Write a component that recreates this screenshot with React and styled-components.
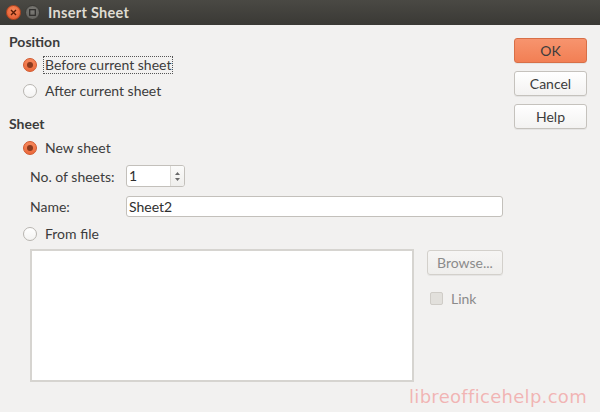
import React from "react";
import styled, { createGlobalStyle } from "styled-components";

const GlobalStyle = createGlobalStyle`
  html, body {
    margin: 0;
    padding: 0;
    background: #f2f1f0;
  }
  body {
    font-family: Lato, "Noto Sans", sans-serif;
    font-size: 14px;
    color: #3c3c3c;
  }
`;

const Window = styled.div`
  width: 600px;
  height: 412px;
  background: #f2f1f0;
  position: relative;
  overflow: hidden;
`;

const TitleBar = styled.div`
  height: 25px;
  background: linear-gradient(#4a4944, #3a3935);
  display: flex;
  align-items: center;
  padding-left: 6px;
  gap: 4px;
`;

const WinButton = styled.div`
  width: 13px;
  height: 13px;
  flex-shrink: 0;
  border-radius: 50%;
  background: ${(p) =>
    p.close
      ? "radial-gradient(circle at 50% 35%, #f78a5a, #e0522a)"
      : "radial-gradient(circle at 50% 35%, #7d7c77, #5d5c58)"};
  border: 1px solid ${(p) => (p.close ? "#b5461f" : "#3a3935")};
  display: flex;
  align-items: center;
  justify-content: center;
`;

const Title = styled.span`
  color: #dfdbd2;
  font-weight: bold;
  font-size: 14.5px;
  margin-left: 4px;
  letter-spacing: 0.3px;
`;

const Body = styled.div`
  display: flex;
  padding: 8px 0 0 9px;
`;

const Main = styled.div`
  width: 494px;
  display: flex;
  flex-direction: column;
`;

const Heading = styled.div`
  height: 19px;
  line-height: 18px;
  font-weight: bold;
  margin-top: ${(p) => p.top || 0}px;
`;

const RadioRow = styled.div`
  height: 26px;
  display: flex;
  align-items: center;
  padding-left: 14px;
  gap: 8px;
  margin-top: ${(p) => p.top || 0}px;
`;

const Radio = styled.div`
  width: 14px;
  height: 14px;
  box-sizing: border-box;
  border-radius: 50%;
  border: 1px solid ${(p) => (p.on ? "#d0572c" : "#b8b5b0")};
  background: ${(p) =>
    p.on ? "linear-gradient(#f7875b, #ec6a3c)" : "linear-gradient(#ffffff, #f4f3f2)"};
  display: flex;
  align-items: center;
  justify-content: center;
  &::after {
    content: "";
    display: ${(p) => (p.on ? "block" : "none")};
    width: 6px;
    height: 6px;
    border-radius: 50%;
    background: #8a3a1e;
  }
`;

const RadioLabel = styled.span`
  padding: 0 1px;
  border: 1px dotted ${(p) => (p.focus ? "#555" : "transparent")};
  line-height: 16px;
  margin-left: -2px;
`;

const FieldRow = styled.div`
  display: flex;
  align-items: center;
  padding-left: 21px;
  margin-top: ${(p) => p.top || 0}px;
`;

const FieldLabel = styled.span`
  width: 96px;
`;

const SpinBox = styled.div`
  display: flex;
  width: 59px;
  height: 22px;
  box-sizing: border-box;
  border: 1px solid #c3c0bb;
  border-radius: 3px;
  background: #fff;
`;

const SpinInput = styled.div`
  flex: 1;
  padding-left: 2px;
  line-height: 20px;
  color: #2f2f2f;
`;

const SpinButtons = styled.div`
  width: 13px;
  border-left: 1px solid #dcdad6;
  background: linear-gradient(#fbfbfa, #efeeec);
  border-radius: 0 2px 2px 0;
  display: flex;
  flex-direction: column;
  align-items: center;
  justify-content: center;
  gap: 3px;
`;

const TextField = styled.div`
  width: 377px;
  height: 21px;
  box-sizing: border-box;
  border: 1px solid #c3c0bb;
  border-radius: 3px;
  background: #fff;
  padding-left: 2px;
  line-height: 19px;
  color: #2f2f2f;
`;

const FileArea = styled.div`
  display: flex;
  margin-top: 2px;
  padding-left: 21px;
`;

const PreviewBox = styled.div`
  width: 384px;
  height: 133px;
  box-sizing: border-box;
  border: 2px solid #d6d4d0;
  background: #fff;
`;

const FileSide = styled.div`
  margin-left: 13px;
  padding-top: 1px;
  display: flex;
  flex-direction: column;
`;

const Button = styled.div`
  width: ${(p) => p.w || 73}px;
  height: 25px;
  box-sizing: border-box;
  border-radius: 3px;
  display: flex;
  align-items: center;
  justify-content: center;
  font-size: 14px;
  color: ${(p) => (p.disabled ? "#8b8b8b" : "#3c3c3c")};
  border: 1px solid ${(p) => (p.primary ? "#d86f47" : p.disabled ? "#d3d0cb" : "#c5c2bd")};
  background: ${(p) =>
    p.primary
      ? "linear-gradient(#f7946e, #f27f54)"
      : p.disabled
      ? "linear-gradient(#f6f5f4, #efeeec)"
      : "linear-gradient(#ffffff, #f3f2f1)"};
  box-shadow: 0 1px 0 rgba(0, 0, 0, 0.05);
`;

const CheckRow = styled.div`
  display: flex;
  align-items: center;
  gap: 8px;
  margin-top: 15px;
  padding-left: 3px;
  color: #8b8b8b;
`;

const CheckBox = styled.div`
  width: 13px;
  height: 13px;
  box-sizing: border-box;
  border: 1px solid #cfccc7;
  border-radius: 2px;
  background: #e2e0dc;
`;

const ButtonColumn = styled.div`
  margin-left: 11px;
  margin-top: 5px;
  display: flex;
  flex-direction: column;
  gap: 8px;
`;

const Watermark = styled.div`
  position: absolute;
  right: 13px;
  bottom: 5px;
  font-family: "DejaVu Sans", sans-serif;
  font-size: 18px;
  color: rgba(240, 120, 120, 0.5);
  letter-spacing: 0.3px;
`;

export default function App() {
  return (
    <Window>
      <GlobalStyle />
      <TitleBar>
        <WinButton close>
          <svg width="7" height="7" viewBox="0 0 7 7">
            <path d="M1 1L6 6M6 1L1 6" stroke="#5a1c08" strokeWidth="1.4" />
          </svg>
        </WinButton>
        <WinButton>
          <svg width="7" height="7" viewBox="0 0 7 7">
            <rect x="0.7" y="0.7" width="5.6" height="5.6" fill="none" stroke="#2c2b28" strokeWidth="1.2" />
          </svg>
        </WinButton>
        <Title>Insert Sheet</Title>
      </TitleBar>
      <Body>
        <Main>
          <Heading>Position</Heading>
          <RadioRow>
            <Radio on />
            <RadioLabel focus>Before current sheet</RadioLabel>
          </RadioRow>
          <RadioRow>
            <Radio />
            <RadioLabel>After current sheet</RadioLabel>
          </RadioRow>
          <Heading top={11}>Sheet</Heading>
          <RadioRow top={1}>
            <Radio on />
            <RadioLabel>New sheet</RadioLabel>
          </RadioRow>
          <FieldRow top={4}>
            <FieldLabel>No. of sheets:</FieldLabel>
            <SpinBox>
              <SpinInput>1</SpinInput>
              <SpinButtons>
                <svg width="5" height="3" viewBox="0 0 5 3">
                  <path d="M0 3L2.5 0L5 3Z" fill="#6a6a6a" />
                </svg>
                <svg width="5" height="3" viewBox="0 0 5 3">
                  <path d="M0 0L2.5 3L5 0Z" fill="#6a6a6a" />
                </svg>
              </SpinButtons>
            </SpinBox>
          </FieldRow>
          <FieldRow top={9}>
            <FieldLabel>Name:</FieldLabel>
            <TextField>Sheet2</TextField>
          </FieldRow>
          <RadioRow top={4}>
            <Radio />
            <RadioLabel>From file</RadioLabel>
          </RadioRow>
          <FileArea>
            <PreviewBox />
            <FileSide>
              <Button w={76} disabled>
                Browse...
              </Button>
              <CheckRow>
                <CheckBox />
                <span>Link</span>
              </CheckRow>
            </FileSide>
          </FileArea>
        </Main>
        <ButtonColumn>
          <Button primary>OK</Button>
          <Button>Cancel</Button>
          <Button>Help</Button>
        </ButtonColumn>
      </Body>
      <Watermark>libreofficehelp.com</Watermark>
    </Window>
  );
}
